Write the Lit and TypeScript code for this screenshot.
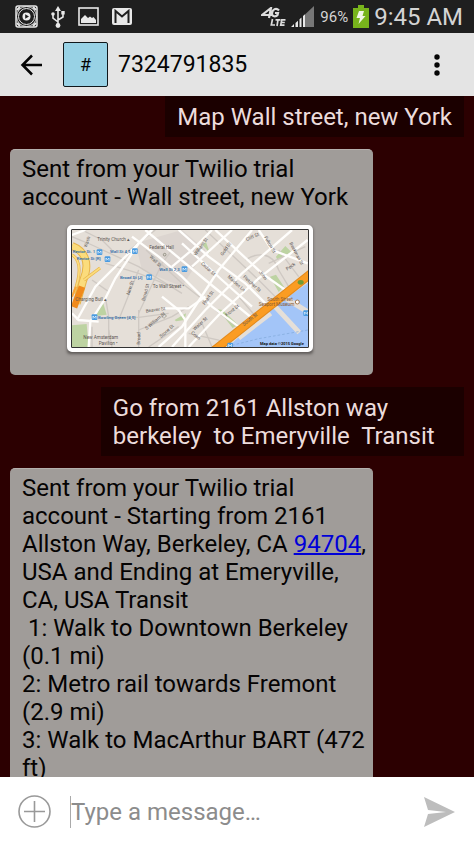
import { LitElement, html, css, svg } from "lit";
import { customElement, property } from "lit/decorators.js";

const roads = {
  minor: [
    "M0 20L60 45L200 110L330 190",
    "M30 0L90 30L120 60",
    "M160 70L250 0",
    "M222 60L330 160L420 230",
    "M200 250L270 100L300 60",
    "M140 270L200 120",
    "M60 150L110 185",
    "M100 100L200 130L300 170",
    "M110 300L120 351",
    "M60 290L60 351",
    "M100 200L110 260L110 340",
    "M200 240L200 351",
    "M110 262H200L290 250",
    "M200 300L300 260L350 230",
    "M230 351L320 290",
    "M400 0L560 150L640 230",
    "M520 90C550 70 600 60 620 120L650 170",
    "M590 100L700 50",
    "M500 200L560 270",
    "M350 310L440 330L460 351",
    "M430 240L520 310",
    "M390 280L420 351",
    "M620 60L680 140",
  ],
  major: [
    "M0 15L40 0",
    "M0 250L20 270L80 275",
    "M15 270L70 170L240 0",
    "M55 275L100 205L130 145L200 40L240 0",
    "M55 275L50 351",
    "M180 20L260 80L330 140L420 230L500 290",
    "M220 0L400 150L560 280",
    "M320 0L410 80L520 160L600 240",
    "M420 0L360 60L300 110",
    "M330 40L450 150L540 230",
    "M480 0L360 110",
    "M560 0L600 60L707 100",
    "M300 351L400 240L510 130L660 0",
    "M350 351L440 255L560 145L707 30",
    "M260 351L330 290L440 120L540 0",
    "M270 200L320 240L340 270L340 351",
    "M270 235L350 235L400 200",
    "M430 0L570 130L640 180",
  ],
};

const labels: Array<[number, number, number, string]> = [
  [76, 32, 0, "Trinity Church ▴"],
  [232, 58, 0, "Federal Hall"],
  [242, 175, 0, "To Wall Street •"],
  [10, 214, 0, "Charging Bull ▴"],
  [34, 328, 0, "New Amsterdam"],
  [80, 345, 0, "Pavilion •"],
  [44, 54, -72, "Wash"],
  [232, 82, 45, "Wall St"],
  [172, 196, -72, "New St"],
  [218, 214, -75, "Broad St"],
  [222, 248, -8, "Beaver St"],
  [224, 300, -40, "S William St"],
  [268, 324, -42, "Stone St"],
  [204, 344, -88, "Broad"],
  [372, 78, -55, "William St"],
  [452, 78, -55, "Gold St"],
  [524, 34, -25, "Cliff St"],
  [576, 22, 60, "Fulton St"],
  [652, 40, 62, "Beekman St"],
  [386, 102, 42, "Cedar St"],
  [466, 142, 42, "Maiden Ln"],
  [512, 142, 42, "Fletcher St"],
  [398, 226, -55, "Pearl St"],
  [368, 302, -42, "Water St"],
  [464, 260, -38, "Front St"],
  [516, 288, -38, "South St"],
  [560, 126, 55, "John"],
  [646, 122, -35, "Peck"],
  [356, 310, 40, "Coen"],
];

const stations: Array<[number, number, string]> = [
  [2, 70, "Rector St. 1"],
  [14, 91, "Rector St [R]"],
  [114, 68, "Wall St 4,5"],
  [262, 122, "Wall St 2,3"],
  [144, 147, "Broad St [J]"],
];

@customElement("street-map")
class StreetMap extends LitElement {
  static styles = css`
    :host { display: block; }
    svg { display: block; width: 100%; height: auto; }
    .minor { fill: none; stroke: #cfc9c3; stroke-width: 4; }
    .major { fill: none; stroke: #fffefc; stroke-width: 7; }
    .park { fill: #bdd3a2; }
    text { font-family: Roboto, sans-serif; font-size: 14px; fill: #5b5552; }
    .stop { fill: #2868a6; font-size: 13px; font-weight: 500; }
    .dark { fill: #111; font-weight: 700; font-size: 12px; }
    .museum { fill: #8a5a32; font-size: 14px; }
    .pin { fill: #4a9be0; }
    .glyph { fill: none; stroke: #fff; stroke-width: 2; }
  `;
  private stop(x: number, y: number) {
    return svg`<g transform="translate(${x} ${y})"><rect class="pin" width="17" height="17" rx="3"/><path class="glyph" d="M4 13V5L8 10L13 5V13"/></g>`;
  }
  render() {
    return html`<svg viewBox="0 0 708 351" role="img" aria-label="Map of Wall Street, New York">
      <rect width="708" height="351" fill="#e5dfd8"/>
      <path fill="#dcd5d0" d="M190 40L330 0L400 60L330 170L210 120Z"/>
      <path class="park" d="M0 286L44 282L50 351H0ZM92 214L72 258L104 254ZM392 46L402 36L414 70ZM612 80L640 48L658 66L616 90ZM594 140L612 134L636 170L620 186ZM438 238L452 240L498 284L482 294ZM308 270L342 250L338 270L312 274Z"/>
      ${roads.minor.map((d) => svg`<path class="minor" d=${d}/>`)}
      ${roads.major.map((d) => svg`<path class="major" d=${d}/>`)}
      <g fill="none">
        <path stroke="#e7b44a" stroke-width="24" d="M0 48C40 64 54 100 34 150L14 220"/>
        <path stroke="#fbdc7c" stroke-width="18" d="M0 48C40 64 54 100 34 150L14 220"/>
        <path stroke="#e7b44a" stroke-width="9" d="M0 74C26 90 28 130 6 190M36 150L84 114"/>
        <path stroke="#fbdc7c" stroke-width="5" d="M0 74C26 90 28 130 6 190M36 150L84 114"/>
        <path stroke="#f08a1c" stroke-width="20" d="M30 170L6 232"/>
        <path stroke="#f8a53a" stroke-width="6" d="M12 170L0 200"/>
      </g>
      <path fill="#a3c5f8" d="M468 351L500 322L600 238L640 206L708 158V351Z"/>
      <path fill="none" stroke="#e5dfd8" stroke-width="15" d="M606 226L682 308M500 324L596 250M640 204L708 246"/>
      <path stroke="#e2891b" stroke-width="26" d="M424 363L720 128"/>
      <path stroke="#fb9c22" stroke-width="20" d="M424 363L720 128"/>
      <path fill="none" stroke="#7ea7d8" stroke-width="2" stroke-dasharray="8 6" d="M480 346L560 326L708 300"/>
      <ellipse cx="686" cy="157" rx="9" ry="7" fill="#6f9a35"/>
      ${labels.map(([x, y, a, t]) => svg`<text x=${x} y=${y} transform="rotate(${a} ${x} ${y})">${t}</text>`)}
      ${stations.map(([x, y, t]) => svg`<text class="stop" x=${x} y=${y}>${t}</text>`)}
      <text class="stop" x="78" y="266">Bowling Green [4,5]</text>
      ${this.stop(74, 58)}${this.stop(98, 79)}${this.stop(180, 55)}${this.stop(329, 109)}
      ${this.stop(223, 133)}${this.stop(59, 253)}${this.stop(466, 338)}${this.stop(694, 241)}
      <circle cx="278" cy="74" r="4" fill="none" stroke="#776" stroke-width="2"/>
      <circle cx="276" cy="258" r="6" fill="none" stroke="#776" stroke-width="2" stroke-dasharray="4 2"/>
      <circle cx="676" cy="216" r="6" fill="#fff" stroke="#a97b4d" stroke-width="3"/>
      <text class="museum" x="586" y="212">South Street</text>
      <text class="museum" x="560" y="229">Seaport Museum</text>
      <text class="dark" x="564" y="346">Map data ©2015 Google</text>
    </svg>`;
  }
}

@customElement("message-bubble")
class MessageBubble extends LitElement {
  @property({ type: Boolean, reflect: true }) sent = false;
  static styles = css`
    :host {
      display: block;
      box-sizing: border-box;
      flex: none;
      width: 80%;
      padding: 5px 4px 27px 12px;
      border-radius: 5px;
      background: #a09c99;
      border-top: 1px solid #b5b0ae;
      color: #050303;
      white-space: pre-wrap;
    }
    :host([sent]) {
      align-self: flex-end;
      width: auto;
      max-width: 80%;
      padding: 6px 12px;
      border-radius: 0;
      border-color: #1b0000;
      background: #1b0000;
      color: #ecdcdc;
    }
  `;
  render() {
    return html`<slot></slot>`;
  }
}

@customElement("app-root")
class AppRoot extends LitElement {
  static styles = css`
    :host {
      display: flex;
      flex-direction: column;
      height: 100vh;
      overflow: hidden;
      background: #2c0001;
      font-family: Roboto, "Noto Sans", sans-serif;
      font-size: 24px;
      line-height: 28px;
    }
    svg { display: block; flex: none; }
    button { padding: 0; border: 0; background: none; color: inherit; }
    .status {
      display: flex;
      align-items: center;
      justify-content: space-between;
      flex: none;
      height: 33px;
      padding: 0 11px 0 15px;
      background: #1f1f1f;
      color: #d4d4d4;
    }
    .notes, .system { display: flex; align-items: center; }
    .notes { gap: 13px; }
    .system { gap: 5px; }
    .battery { font-size: 15px; }
    .bar {
      display: flex;
      align-items: center;
      flex: none;
      height: 63px;
      padding: 0 25px 0 20px;
      background: #e4e4e4;
      color: #050505;
    }
    .avatar {
      box-sizing: border-box;
      width: 45px;
      height: 45px;
      margin: 0 10px 0 20px;
      border: 1px solid #10181b;
      border-radius: 2px;
      background: #98d2e5;
      font-size: 18px;
      line-height: 43px;
      text-align: center;
    }
    h1 { flex: 1; margin: 0; font-size: 23px; font-weight: 400; line-height: 30px; }
    .thread {
      display: flex;
      flex-direction: column;
      gap: 12px;
      flex: 1;
      min-height: 0;
      overflow: hidden;
      padding: 0 10px;
    }
    .map {
      width: 236px;
      margin: 18px 0 0 49px;
      border: 1px solid #333;
      outline: 4px solid #fff;
      border-radius: 1px;
      box-shadow: 0 2px 3px 4px #5e5a58;
    }
    a { color: #0000d8; text-decoration-thickness: 2px; }
    .composer {
      display: flex;
      align-items: center;
      gap: 19px;
      flex: none;
      height: 65px;
      padding: 4px 18px 0;
      box-sizing: border-box;
      background: #fff;
    }
    .field { display: flex; flex: 1; min-width: 0; height: 32px; border-left: 1px solid #aaa; }
    input {
      width: 100%;
      min-width: 0;
      padding: 0;
      border: 0;
      outline: 0;
      background: none;
      font: inherit;
      color: #222;
    }
    input::placeholder { color: #8c8c8c; opacity: 1; }
  `;

  render() {
    return html`
      <div class="status">
        <div class="notes">
          <svg width="23" height="23" viewBox="0 0 23 23" fill="none" stroke="#e8e8e8">
            <rect x="1" y="1" width="21" height="21" rx="2" stroke-width="1.5"/>
            <circle cx="11.5" cy="11.5" r="10"/><circle cx="11.5" cy="11.5" r="8"/>
            <circle cx="11.5" cy="11.5" r="4" fill="#eee" stroke="none"/>
            <path d="M10.2 9.2L14 11.5L10.2 13.8Z" fill="#1f1f1f" stroke="none"/>
            <path d="M2 5L5 2M18 2L21 5M2 18L5 21M18 21L21 18" stroke-width="2"/>
          </svg>
          <svg width="14" height="22" viewBox="0 0 14 22" fill="none" stroke="#e8e8e8" stroke-width="1.6">
            <path d="M7 3V19M7 16L2 12V8M7 14L12 11V7"/>
            <path d="M7 0L10 5H4Z" fill="#e8e8e8" stroke="none"/>
            <circle cx="7" cy="19.5" r="2.4" fill="#e8e8e8" stroke="none"/>
            <circle cx="2" cy="8" r="1.8" fill="#e8e8e8" stroke="none"/>
            <path d="M10.3 5H13.7V8.5H10.3Z" fill="#e8e8e8" stroke="none"/>
          </svg>
          <svg width="21" height="19" viewBox="0 0 21 19">
            <rect x="1" y="1" width="19" height="17" fill="none" stroke="#e8e8e8" stroke-width="1.6"/>
            <path d="M3 16V12L7 8L10 11L12 9.5L14 11L15.5 10L18 13V16Z" fill="#e8e8e8"/>
          </svg>
          <svg width="20" height="17" viewBox="0 0 20 17">
            <rect width="20" height="17" rx="2" fill="#e8e8e8"/>
            <path d="M3.5 15V3L10 8.5L16.5 3V15" fill="none" stroke="#1f1f1f" stroke-width="2"/>
          </svg>
        </div>
        <div class="system">
          <svg width="25" height="20" viewBox="0 0 25 20" fill="none" stroke="#ddd" stroke-width="2.2" role="img" aria-label="4G LTE">
            <path d="M8 11L10 1L1 8H10.5M18 3.5C15 0 11.5 2.5 11 6C10.7 10 15 10 16.5 8L17 6H14"/>
            <path stroke-width="1.7" d="M11.5 12L10.3 18H14M14.5 12.8H19.5M17 12.8L16 19M24.5 12.8H20.8L19.7 18.2H23.5M20.5 15.5H23.8"/>
          </svg>
          <svg width="24" height="22" viewBox="0 0 24 22">
            <path d="M14 8.5L23 0V21H14Z" fill="#777"/>
            <path d="M0 21L3 18V21ZM4.5 17L7 14.7V21H4.5ZM8.5 13.3L10.5 11.5V21H8.5ZM12 10L14 8.2V21H12Z" fill="#e8e8e8"/>
          </svg>
          <span class="battery">96%</span>
          <svg width="16" height="23" viewBox="0 0 16 23">
            <path d="M5 0H11V3H16V23H0V3H5Z" fill="#78b41c"/>
            <path d="M6 6H11L9.5 11H12.5L5.5 19L7 13H3.5Z" fill="#f2f6e8"/>
          </svg>
          <span class="clock">9:45 AM</span>
        </div>
      </div>
      <header class="bar">
        <button aria-label="Back">
          <svg width="23" height="22" viewBox="0 0 23 22" fill="none" stroke="#050505" stroke-width="2.5">
            <path d="M22 11H3M12 1.5L2.5 11L12 20.5"/>
          </svg>
        </button>
        <div class="avatar">#</div>
        <h1>7324791835</h1>
        <button aria-label="More options">
          <svg width="24" height="22" viewBox="0 0 24 22" fill="#050505">
            <circle cx="12" cy="3" r="2.7"/><circle cx="12" cy="11" r="2.7"/><circle cx="12" cy="19" r="2.7"/>
          </svg>
        </button>
      </header>
      <main class="thread">
        <message-bubble sent>Map Wall street, new York</message-bubble>
        <message-bubble>Sent from your Twilio trial account - Wall street, new York<street-map class="map"></street-map></message-bubble>
        <message-bubble sent>Go from 2161 Allston way berkeley  to Emeryville  Transit</message-bubble>
        <message-bubble>Sent from your Twilio trial account - Starting from 2161 Allston Way, Berkeley, CA <a href="#94704">94704</a>, USA and Ending at Emeryville, CA, USA Transit
 1: Walk to Downtown Berkeley (0.1 mi)
2: Metro rail towards Fremont (2.9 mi)
3: Walk to MacArthur BART (472 ft)</message-bubble>
      </main>
      <form class="composer">
        <button type="button" aria-label="Add attachment">
          <svg width="33" height="33" viewBox="0 0 33 33" fill="none" stroke="#999" stroke-width="1.6">
            <circle cx="16.5" cy="16.5" r="15.5"/><path d="M16.5 6V27M6 16.5H27"/>
          </svg>
        </button>
        <label class="field"><input aria-label="Message" placeholder="Type a message…"></label>
        <button type="button" aria-label="Send">
          <svg width="32" height="30" viewBox="0 0 32 30"><path d="M0 0L31 15L0 30L4 17L22 15L4 13Z" fill="#bdbdbd"/></svg>
        </button>
      </form>`;
  }
}
